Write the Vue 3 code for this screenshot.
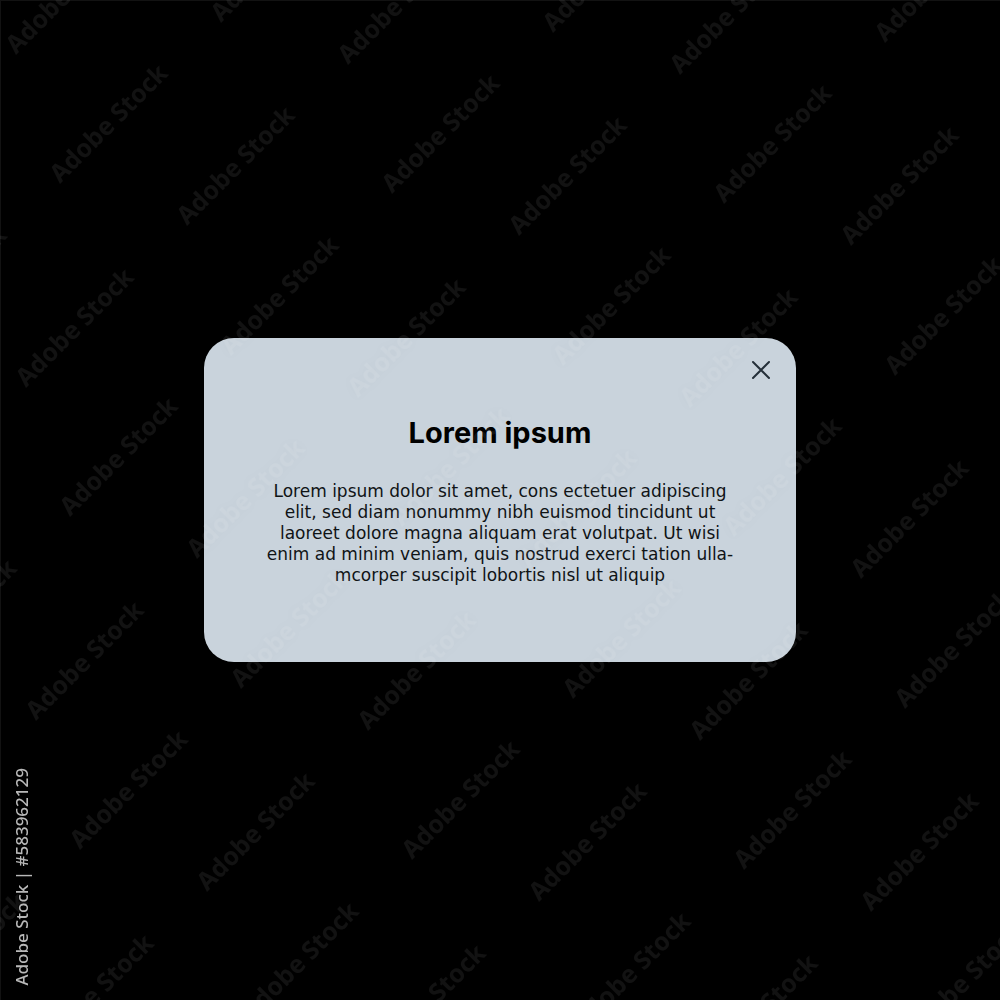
<template>
  <div class="page">
    <section v-if="visible" class="dialog" role="dialog" aria-labelledby="dialog-title">
      <div class="dialog-bar">
        <button type="button" class="close" aria-label="Close" @click="close">
          <svg viewBox="0 0 20 20" width="20" height="20">
            <path d="M2 2 L18 18 M18 2 L2 18" />
          </svg>
        </button>
      </div>
      <h1 id="dialog-title">{{ title }}</h1>
      <p>{{ lines.join('\n') }}</p>
    </section>

    <svg class="marks" aria-hidden="true">
      <text v-for="(m, i) in marks" :key="i" :transform="`translate(${m.x} ${m.y}) rotate(-45)`">Adobe Stock</text>
    </svg>
    <div class="credit">Adobe Stock | #583962129</div>
  </div>
</template>

<script setup>
import { ref } from 'vue'

const visible = ref(true)
const title = 'Lorem ipsum'
const lines = [
  'Lorem ipsum dolor sit amet, cons ectetuer adipiscing',
  'elit, sed diam nonummy nibh euismod tincidunt ut',
  'laoreet dolore magna aliquam erat volutpat. Ut wisi',
  'enim ad minim veniam, quis nostrud exerci tation ulla-',
  'mcorper suscipit lobortis nisl ut aliquip'
]

// four marks per tile, tiles are slightly skewed
const offsets = [[0, 0], [127, 42], [171, 172], [298, 214]]
const marks = []
for (let row = -2; row < 4; row++) {
  for (let col = -2; col < 4; col++) {
    for (const [dx, dy] of offsets) {
      const x = 60 + col * 332 + row * 10 + dx
      const y = 184 + col * 10 + row * 333 + dy
      // skip the ones that never reach the page
      if (x > -115 && x < 1000 && y > 0 && y < 1110) {
        marks.push({ x, y })
      }
    }
  }
}

const close = () => {
  visible.value = false
}
</script>

<style>
body {
  margin: 0;
  background: #000;
}
</style>

<style scoped>
.page {
  position: relative;
  box-sizing: border-box;
  min-height: 100vh;
  display: flex;
  align-items: center;
  justify-content: center;
  overflow: hidden;
  background: #000;
  box-shadow: inset 1px 1px 0 #121212;
  font-family: Inter, "Open Sans", sans-serif;
}

.dialog {
  box-sizing: border-box;
  width: 100%;
  max-width: 592px;
  padding: 20px 23px 76px;
  border-radius: 30px;
  background: #c9d3dc;
  color: #000;
  text-align: center;
}

.dialog-bar {
  display: flex;
  justify-content: flex-end;
}

.close {
  display: flex;
  padding: 2px;
  border: 0;
  background: none;
  cursor: pointer;
}

.close path {
  fill: none;
  stroke: #25303a;
  stroke-width: 2;
  stroke-linecap: round;
}

h1 {
  margin: 33px 0 30px;
  font-size: 29px;
  line-height: 36px;
  font-weight: 700;
}

p {
  margin: 0;
  font-family: "DejaVu Sans", sans-serif;
  font-size: 17px;
  line-height: 21px;
  color: #101416;
  white-space: pre-line;
}

.marks {
  position: absolute;
  inset: 0;
  width: 100%;
  height: 100%;
  pointer-events: none;
  filter: drop-shadow(0 0 5px rgba(0, 0, 0, 0.3));
}

.marks text {
  font-family: "Noto Sans", "Open Sans", sans-serif;
  font-size: 25px;
  font-weight: 700;
  fill: rgba(255, 255, 255, 0.07);
}

.credit {
  position: absolute;
  left: 10px;
  bottom: 14px;
  writing-mode: vertical-rl;
  transform: rotate(180deg);
  font-family: "Noto Sans", "Open Sans", sans-serif;
  font-size: 17px;
  line-height: 24px;
  font-weight: 500;
  color: #b8b8b8;
  white-space: nowrap;
}
</style>
